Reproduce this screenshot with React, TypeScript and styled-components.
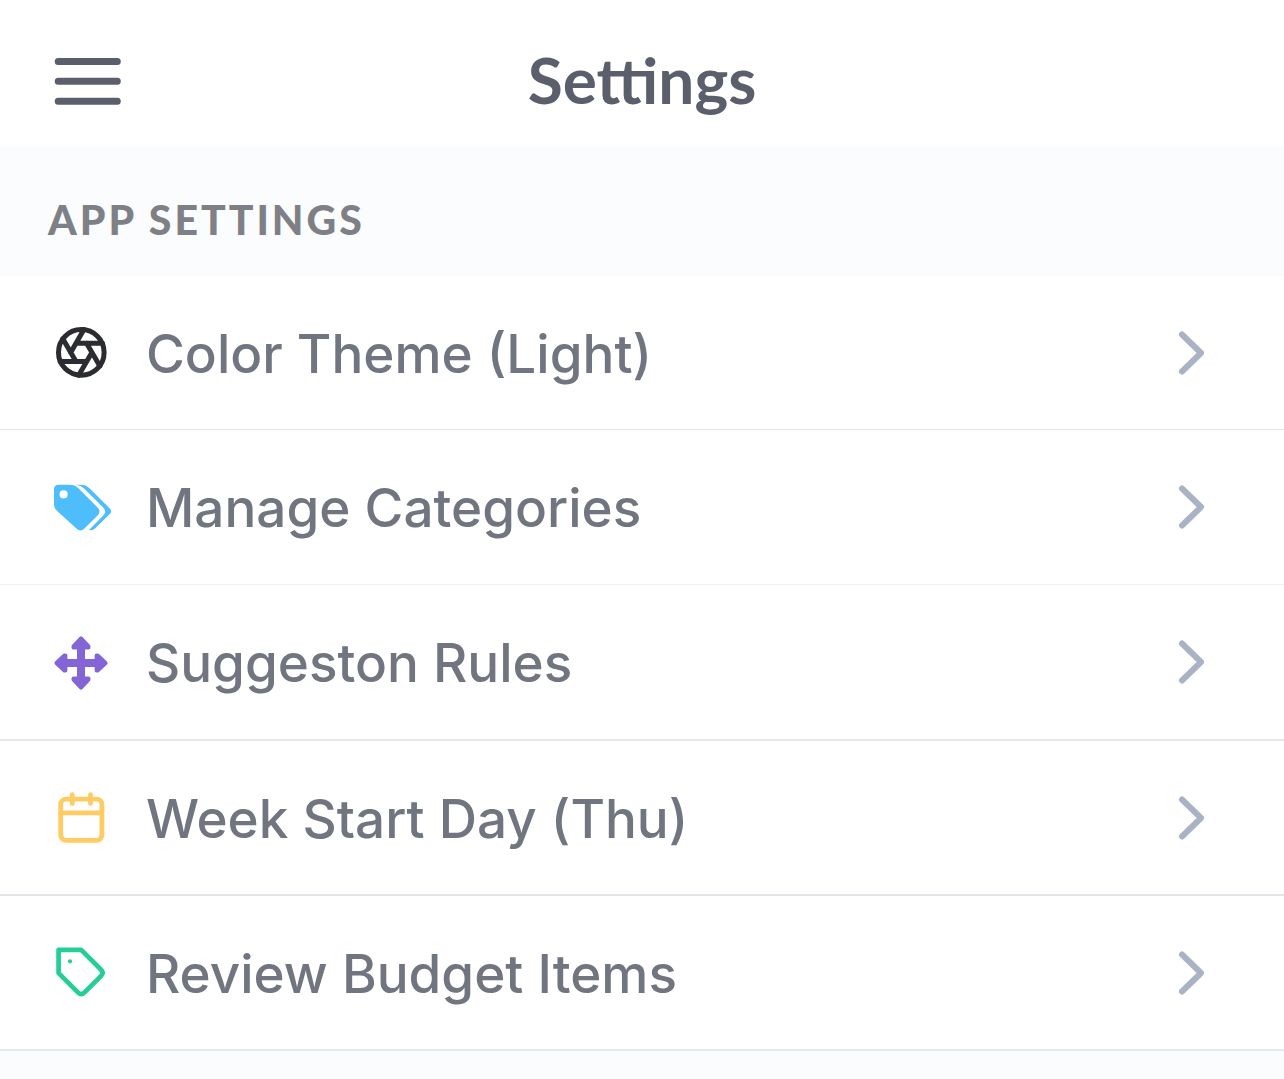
import React from "react";
import styled, { createGlobalStyle } from "styled-components";

const GlobalStyle = createGlobalStyle`
  *, *::before, *::after { box-sizing: border-box; }
  body {
    margin: 0;
    background: #fbfcfe;
    font-family: Inter, "Liberation Sans", sans-serif;
  }
`;

const Page = styled.div`
  width: 100%;
`;

const Header = styled.header`
  display: grid;
  grid-template-columns: 72px 1fr 72px;
  align-items: center;
  height: 146px;
  padding: 14px 52px 0;
  background: #fff;
`;

const MenuButton = styled.button`
  display: flex;
  width: 72px;
  padding: 0;
  border: 0;
  background: none;
  color: #5a5f6b;
  cursor: pointer;
`;

const Title = styled.h1`
  margin: 0;
  color: #5a5f6b;
  font-family: Lato, "Liberation Sans", sans-serif;
  font-size: 64px;
  font-weight: 700;
  line-height: 72px;
  text-align: center;
`;

const SectionTitle = styled.h2`
  display: flex;
  align-items: center;
  height: 130px;
  margin: 0;
  padding: 18px 48px 0;
  background: #fbfcfe;
  color: #7f8085;
  font-family: Lato, "Liberation Sans", sans-serif;
  font-size: 41px;
  font-weight: 900;
  line-height: 48px;
  letter-spacing: 3px;
  text-transform: uppercase;
`;

const List = styled.ul`
  margin: 0;
  padding: 0;
  list-style: none;
  border-bottom: 2px solid #e5e8ed;
`;

const Item = styled.li<{ $line: string; $thickness: number }>`
  height: 155px;
  border-top: ${(p) => p.$thickness}px solid ${(p) => p.$line};
  background: #fff;

  &:first-child {
    height: 153px;
    border-top: 0;
  }
`;

const RowLink = styled.a`
  display: flex;
  align-items: center;
  height: 100%;
  padding: 0 76px 0 52px;
  color: #707580;
  text-decoration: none;
`;

const IconBox = styled.span`
  display: flex;
  flex: none;
  width: 94px;
`;

const Label = styled.span`
  flex: 1;
  padding-top: 2px;
  font-size: 53px;
  font-weight: 500;
  line-height: 64px;
`;

const MenuIcon = () => (
  <svg width="72" height="60" viewBox="0 0 72 60" fill="none" stroke="currentColor" strokeWidth="7" strokeLinecap="round" aria-hidden="true">
    <path d="M6.2 11.5H65.3M6.2 31.3H65.3M6.2 51.2H65.3" />
  </svg>
);

const Chevron = () => (
  <svg width="32" height="48" viewBox="0 0 32 48" fill="none" stroke="#a9b3c4" strokeWidth="6" strokeLinecap="round" strokeLinejoin="round" aria-hidden="true">
    <path d="M6 5.5L25 24L6 42.5" />
  </svg>
);

const ApertureIcon = () => (
  <svg width="58" height="58" viewBox="0 0 58 58" fill="none" stroke="#2b2c31" strokeWidth="5" strokeLinecap="round" aria-hidden="true">
    <g transform="translate(0 -0.6)">
      <circle cx="29.3" cy="29" r="22.8" />
      <path d="M34.6 19.8L47.8 42.7M24 19.8H50.4M18.7 29L31.9 6.1M24 38.2L10.8 15.3M34.6 38.2H8.2M39.9 29L26.7 51.9" />
    </g>
  </svg>
);

const TagsIcon = () => (
  <svg width="60" height="58" viewBox="0 -1 60 58" fill="#4dbdfc" aria-hidden="true">
    <path fillRule="evenodd" d="M6.5 5.7H17.5C21.5 5.7 24 6.8 26.4 9.2L45.6 28.4C48 30.8 48 34 45.6 36.4L32.2 49.8C30 52 27 52 24.7 49.8L5.2 32C2.8 29.7 2 27.5 2 24.5V10.2C2 7.4 3.7 5.7 6.5 5.7ZM11.6 11.3A4.1 4.1 0 1 0 11.6 19.5A4.1 4.1 0 1 0 11.6 11.3Z" />
    <path d="M23.8 5.7H28.5C32.4 5.7 35 6.8 37.5 9.2L57.8 29.4C59.7 31.3 59.7 33.2 57.8 35.1L43.2 49.3C41.5 51 39.4 51.6 37 50.9L51.2 36.6C53.7 34 53.7 31 51.2 28.5L32.3 9.7C29.7 7.4 27 6.1 23.8 5.7Z" />
  </svg>
);

const MoveIcon = () => (
  <svg width="58" height="58" viewBox="0 -1 58 58" fill="#8465d6" stroke="#8465d6" strokeLinejoin="round" aria-hidden="true">
    <path strokeWidth="8" fill="none" d="M29 9V49M9 29H49" />
    <path strokeWidth="4" d="M29 4.4L36.5 12.4V13.4H21.5V12.4ZM29 53.6L36.5 45.6V44.6H21.5V45.6ZM4.4 29L12.4 21.5H13.4V36.5H12.4ZM53.6 29L45.6 21.5H44.6V36.5H45.6Z" />
  </svg>
);

const CalendarIcon = () => (
  <svg width="58" height="58" viewBox="0 0 58 58" fill="none" stroke="#ffcb63" strokeWidth="4.8" strokeLinecap="round" aria-hidden="true">
    <rect x="8.7" y="10.1" width="41.2" height="41.2" rx="5.5" />
    <path d="M8.7 23.8H49.9M20.3 5.7V14.4M38.5 5.7V14.4" />
  </svg>
);

const TagIcon = () => (
  <svg width="58" height="58" viewBox="0 1 58 58" fill="none" stroke="#25cd98" strokeWidth="4.7" strokeLinejoin="round" aria-hidden="true">
    <path d="M6.6 6.8H29.2L48.9 26.5C51 28.6 51 31 48.9 33.1L32.6 49.4C30.5 51.5 28 51.5 25.9 49.4L6.6 30.1Z" />
    <circle cx="18" cy="18.3" r="2.1" fill="#25cd98" stroke="none" />
  </svg>
);

interface Setting {
  label: string;
  icon: React.ReactNode;
  line: string;
  thickness: number;
}

const settings: Setting[] = [
  { label: "Color Theme (Light)", icon: <ApertureIcon />, line: "#e6e8ec", thickness: 1 },
  { label: "Manage Categories", icon: <TagsIcon />, line: "#e6e7ea", thickness: 1 },
  { label: "Suggeston Rules", icon: <MoveIcon />, line: "#f0f1f3", thickness: 1 },
  { label: "Week Start Day (Thu)", icon: <CalendarIcon />, line: "#e6e8ed", thickness: 2 },
  { label: "Review Budget Items", icon: <TagIcon />, line: "#e4e6ec", thickness: 2 },
];

export default function App() {
  return (
    <Page>
      <GlobalStyle />
      <Header>
        <MenuButton type="button" aria-label="Open menu">
          <MenuIcon />
        </MenuButton>
        <Title>Settings</Title>
      </Header>
      <main>
        <SectionTitle>App Settings</SectionTitle>
        <List>
          {settings.map((s) => (
            <Item key={s.label} $line={s.line} $thickness={s.thickness}>
              <RowLink href="#">
                <IconBox>{s.icon}</IconBox>
                <Label>{s.label}</Label>
                <Chevron />
              </RowLink>
            </Item>
          ))}
        </List>
      </main>
    </Page>
  );
}
